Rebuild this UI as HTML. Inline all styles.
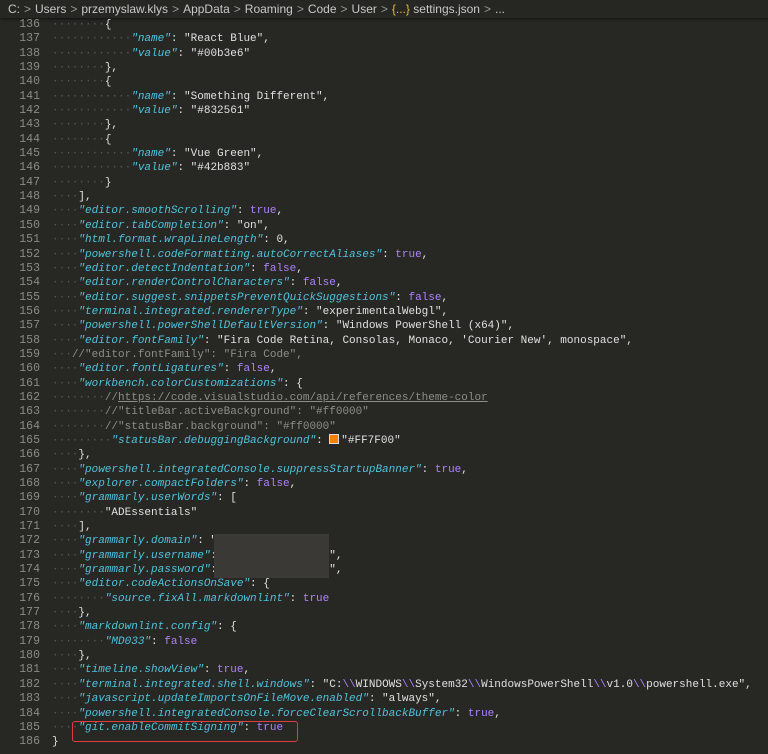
<!DOCTYPE html>
<html><head><meta charset="utf-8"><style>
body{margin:0;width:768px;height:754px;background:#272723;overflow:hidden;font-family:"Liberation Mono",monospace;}
.bc{position:absolute;left:0;top:0;width:768px;height:18px;background:#262623;color:#c8c8c8;font:12px "Liberation Sans",sans-serif;line-height:18px;padding-left:8px;white-space:nowrap;box-shadow:0 1px 3px #111;}
.bc .s{color:#999;margin:0 4px}
.bc .j{color:#e2b93b}
pre{position:absolute;margin:0;top:18px;font-size:11px;line-height:14.34px;color:#e0e0e0;}
#ln{left:0;width:40px;text-align:right;color:#8a8a86;font-size:11.5px;}
#code{left:52px;}
.k{color:#4ec3de;font-style:italic}
.b{color:#ae81ff}
.c{color:#8c8c88}
.d{color:#555}
.blur{position:absolute;left:214px;top:534px;width:115px;height:44px;background:#3a3936;}
.box{position:absolute;left:72px;top:721px;width:224px;height:19px;border:1px solid #e03c3c;border-radius:3px;}
.sw{display:inline-block;width:8px;height:8px;background:#ff7f00;border:1px solid #ddd;vertical-align:-1px;margin-right:2px}
</style></head><body>
<div class="bc">C:<span class="s">&gt;</span>Users<span class="s">&gt;</span>przemyslaw.klys<span class="s">&gt;</span>AppData<span class="s">&gt;</span>Roaming<span class="s">&gt;</span>Code<span class="s">&gt;</span>User<span class="s">&gt;</span><span class="j">{...}</span> settings.json<span class="s">&gt;</span>...</div>
<pre id="ln">136
137
138
139
140
141
142
143
144
145
146
147
148
149
150
151
152
153
154
155
156
157
158
159
160
161
162
163
164
165
166
167
168
169
170
171
172
173
174
175
176
177
178
179
180
181
182
183
184
185
186</pre>
<pre id="code"><span class="d">········</span>{
<span class="d">············</span><span class="k">"name"</span>: "React Blue",
<span class="d">············</span><span class="k">"value"</span>: "#00b3e6"
<span class="d">········</span>},
<span class="d">········</span>{
<span class="d">············</span><span class="k">"name"</span>: "Something Different",
<span class="d">············</span><span class="k">"value"</span>: "#832561"
<span class="d">········</span>},
<span class="d">········</span>{
<span class="d">············</span><span class="k">"name"</span>: "Vue Green",
<span class="d">············</span><span class="k">"value"</span>: "#42b883"
<span class="d">········</span>}
<span class="d">····</span>],
<span class="d">····</span><span class="k">"editor.smoothScrolling"</span>: <span class="b">true</span>,
<span class="d">····</span><span class="k">"editor.tabCompletion"</span>: "on",
<span class="d">····</span><span class="k">"html.format.wrapLineLength"</span>: 0,
<span class="d">····</span><span class="k">"powershell.codeFormatting.autoCorrectAliases"</span>: <span class="b">true</span>,
<span class="d">····</span><span class="k">"editor.detectIndentation"</span>: <span class="b">false</span>,
<span class="d">····</span><span class="k">"editor.renderControlCharacters"</span>: <span class="b">false</span>,
<span class="d">····</span><span class="k">"editor.suggest.snippetsPreventQuickSuggestions"</span>: <span class="b">false</span>,
<span class="d">····</span><span class="k">"terminal.integrated.rendererType"</span>: "experimentalWebgl",
<span class="d">····</span><span class="k">"powershell.powerShellDefaultVersion"</span>: "Windows PowerShell (x64)",
<span class="d">····</span><span class="k">"editor.fontFamily"</span>: "Fira Code Retina, Consolas, Monaco, 'Courier New', monospace",
<span class="d">···</span><span class="c">//"editor.fontFamily": "Fira Code",</span>
<span class="d">····</span><span class="k">"editor.fontLigatures"</span>: <span class="b">false</span>,
<span class="d">····</span><span class="k">"workbench.colorCustomizations"</span>: {
<span class="d">········</span><span class="c">//<u>https://code.visualstudio.com/api/references/theme-color</u></span>
<span class="d">········</span><span class="c">//"titleBar.activeBackground": "#ff0000"</span>
<span class="d">········</span><span class="c">//"statusBar.background": "#ff0000"</span>
<span class="d">·········</span><span class="k">"statusBar.debuggingBackground"</span>: <span class="sw"></span>"#FF7F00"
<span class="d">····</span>},
<span class="d">····</span><span class="k">"powershell.integratedConsole.suppressStartupBanner"</span>: <span class="b">true</span>,
<span class="d">····</span><span class="k">"explorer.compactFolders"</span>: <span class="b">false</span>,
<span class="d">····</span><span class="k">"grammarly.userWords"</span>: [
<span class="d">········</span>"ADEssentials"
<span class="d">····</span>],
<span class="d">····</span><span class="k">"grammarly.domain"</span>: "
<span class="d">····</span><span class="k">"grammarly.username"</span>:                 ",
<span class="d">····</span><span class="k">"grammarly.password"</span>:                 ",
<span class="d">····</span><span class="k">"editor.codeActionsOnSave"</span>: {
<span class="d">········</span><span class="k">"source.fixAll.markdownlint"</span>: <span class="b">true</span>
<span class="d">····</span>},
<span class="d">····</span><span class="k">"markdownlint.config"</span>: {
<span class="d">········</span><span class="k">"MD033"</span>: <span class="b">false</span>
<span class="d">····</span>},
<span class="d">····</span><span class="k">"timeline.showView"</span>: <span class="b">true</span>,
<span class="d">····</span><span class="k">"terminal.integrated.shell.windows"</span>: "C:<span class="b">\\</span>WINDOWS<span class="b">\\</span>System32<span class="b">\\</span>WindowsPowerShell<span class="b">\\</span>v1.0<span class="b">\\</span>powershell.exe",
<span class="d">····</span><span class="k">"javascript.updateImportsOnFileMove.enabled"</span>: "always",
<span class="d">····</span><span class="k">"powershell.integratedConsole.forceClearScrollbackBuffer"</span>: <span class="b">true</span>,
<span class="d">····</span><span class="k">"git.enableCommitSigning"</span>: <span class="b">true</span>
}</pre>
<div class="blur"></div>
<div class="box"></div>
</body></html>
